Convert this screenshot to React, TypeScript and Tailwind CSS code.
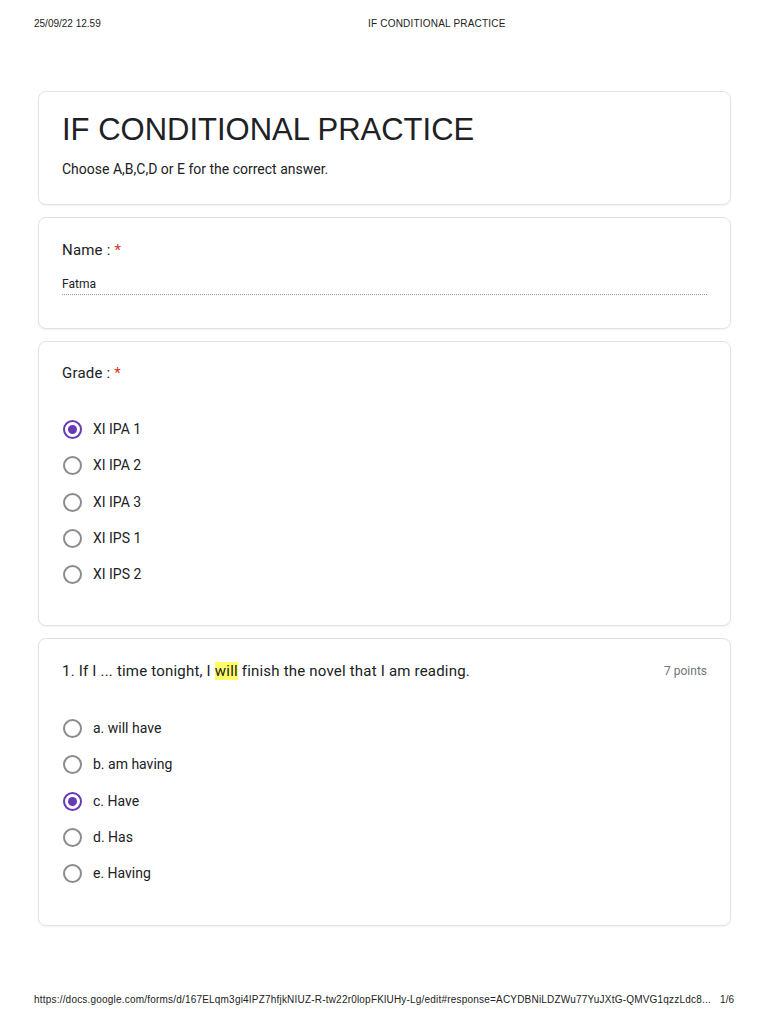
import React from "react"

const grades = ["XI IPA 1", "XI IPA 2", "XI IPA 3", "XI IPS 1", "XI IPS 2"]
const answers = ["a. will have", "b. am having", "c. Have", "d. Has", "e. Having"]

function Radio({ checked }: { checked?: boolean }) {
  return (
    <span
      className={`flex h-[19px] w-[19px] shrink-0 items-center justify-center rounded-full border-2 ${
        checked ? "border-[#673ab7]" : "border-[#8c8c8c]"
      }`}
    >
      {checked && <span className="h-[9px] w-[9px] rounded-full bg-[#673ab7]" />}
    </span>
  )
}

function Options({ items, selected }: { items: string[]; selected: number }) {
  return (
    <div className="flex flex-col gap-[17.25px]">
      {items.map((label, i) => (
        <div key={label} className="flex h-[19px] items-center gap-[11px] pl-[62px]">
          <Radio checked={i === selected} />
          <span className="text-[14px] text-[#202124]">{label}</span>
        </div>
      ))}
    </div>
  )
}

function Card({ className, children }: { className?: string; children: React.ReactNode }) {
  return (
    <div className={`mx-[38px] w-[693px] rounded-[8px] border border-[#e3e3e3] bg-white shadow-[0_1px_2px_rgba(0,0,0,0.06)] ${className ?? ""}`}>
      {children}
    </div>
  )
}

export default function App() {
  return (
    <div className="relative h-[1024px] w-[768px] bg-white font-['Roboto',sans-serif] text-[#202124]">
      <div className="flex h-[46px] items-center px-[34px] pt-[1px] font-['Liberation_Sans',Arial,sans-serif] text-[10px] text-[#222]">
        <span className="w-[334px]">25/09/22 12.59</span>
        <span className="tracking-[0.2px]">IF CONDITIONAL PRACTICE</span>
      </div>

      <div className="mt-[45px] flex flex-col gap-[12px]">
        <Card className="h-[114px] px-[23px] pt-[19px]">
          <h1 className="font-['Liberation_Sans',Arial,sans-serif] text-[31px] leading-[38px] text-[#202124]">IF CONDITIONAL PRACTICE</h1>
          <p className="mt-[10px] text-[14px] leading-[20px]">Choose A,B,C,D or E for the correct answer.</p>
        </Card>

        <Card className="h-[112px] px-[23px] pt-[21px]">
          <div className="text-[15px] leading-[22px] tracking-[0.2px]">
            Name : <span className="text-[#d93025]">*</span>
          </div>
          <div className="mt-[15px] border-b border-dotted border-[#9a9a9a] pb-[1px] text-[12px] leading-[17px] text-[#202124]">
            Fatma
          </div>
        </Card>

        <Card className="h-[285px] pt-[20px]">
          <div className="px-[23px] text-[15px] leading-[22px] tracking-[0.2px]">
            Grade : <span className="text-[#d93025]">*</span>
          </div>
          <div className="mt-[36px] -ml-[38px]">
            <Options items={grades} selected={0} />
          </div>
        </Card>

        <Card className="h-[288px] pt-[21px]">
          <div className="flex items-center justify-between px-[23px]">
            <div className="text-[15px] leading-[22px] tracking-[0.2px]">
              1. If I ... time tonight, I <span className="bg-[#ffff66]">will</span> finish the novel that I am reading.
            </div>
            <div className="text-[12px] text-[#70757a]">7 points</div>
          </div>
          <div className="mt-[37px] -ml-[38px]">
            <Options items={answers} selected={2} />
          </div>
        </Card>
      </div>

      <div className="absolute bottom-[17px] left-0 flex w-full items-center justify-between px-[34px] font-['Liberation_Sans',Arial,sans-serif] text-[10px] text-[#222]">
        <span className="whitespace-nowrap tracking-[0.2px]">
          https://docs.google.com/forms/d/167ELqm3gi4IPZ7hfjkNIUZ-R-tw22r0lopFKlUHy-Lg/edit#response=ACYDBNiLDZWu77YuJXtG-QMVG1qzzLdc8...
        </span>
        <span>1/6</span>
      </div>
    </div>
  )
}
